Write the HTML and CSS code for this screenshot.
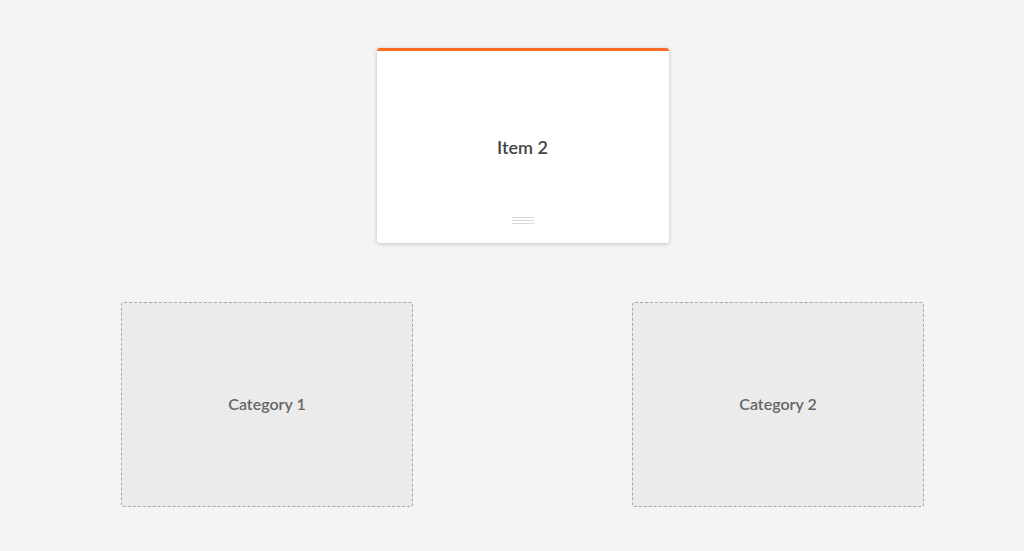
FILE: index.html
```html
<!DOCTYPE html>
<html>
<head>
<meta charset="utf-8">
<link rel="stylesheet" href="styles.css">
</head>
<body>
<div class="board">
  <div class="item-card">
    <div class="item-title">Item 2</div>
    <div class="handle"><span></span><span></span><span></span></div>
  </div>
  <div class="categories">
    <div class="category"><span>Category 1</span></div>
    <div class="category"><span>Category 2</span></div>
  </div>
</div>
</body>
</html>
```
FILE: styles.css
```css
html, body {
  margin: 0;
  padding: 0;
  background: #f4f4f4;
  font-family: Lato, "Open Sans", sans-serif;
}
.board {
  width: 803px;
  margin-left: 121px;
  padding-top: 48px;
  display: flex;
  flex-direction: column;
  align-items: center;
  gap: 59px;
}
.item-card {
  box-sizing: border-box;
  width: 292px;
  height: 195px;
  background: #fff;
  border-top: 3px solid #ff6a25;
  border-radius: 3px;
  box-shadow: 0 1px 4px rgba(0,0,0,0.22);
  display: flex;
  flex-direction: column;
  align-items: center;
  position: relative;
}
.item-title {
  margin-top: 86px;
  font-size: 18px;
  font-weight: 600;
  color: #444;
  line-height: 20px;
}
.handle {
  margin-top: 60px;
  display: flex;
  flex-direction: column;
  gap: 2px;
}
.handle span {
  display: block;
  width: 22px;
  height: 1px;
  background: #d8d8d8;
}
.categories {
  align-self: stretch;
  display: flex;
  justify-content: space-between;
}
.category {
  box-sizing: border-box;
  width: 292px;
  height: 205px;
  padding-bottom: 2px;
  background: #ebebeb;
  border: 1px dashed #a8a8a8;
  border-radius: 3px;
  display: flex;
  align-items: center;
  justify-content: center;
  font-size: 16px;
  font-weight: 600;
  color: #666;
}
```
